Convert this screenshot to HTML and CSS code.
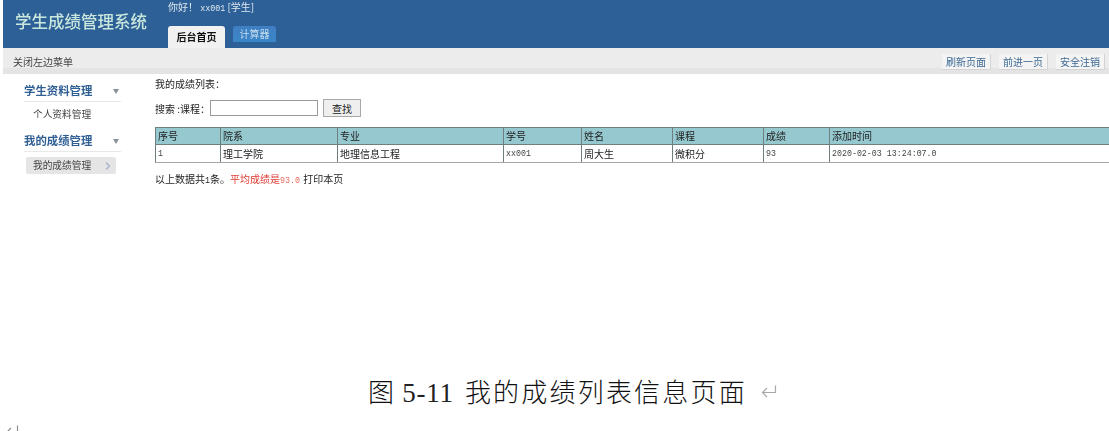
FILE: index.html
```html
<!DOCTYPE html>
<html lang="zh">
<head>
<meta charset="utf-8">
<title>学生成绩管理系统</title>
<link rel="stylesheet" href="styles.css">
</head>
<body>
<div class="shot">
  <header class="top">
    <div class="brand">学生成绩管理系统</div>
    <div class="top-main">
      <div class="hello">你好！ <span class="mono">xx001</span> [学生]</div>
      <div class="tabs">
        <span class="tab active">后台首页</span>
        <span class="tab calc">计算器</span>
      </div>
    </div>
  </header>
  <div class="bar">
    <span class="bar-left">关闭左边菜单</span>
    <div class="bar-actions">
      <span class="btn">刷新页面</span>
      <span class="btn">前进一页</span>
      <span class="btn">安全注销</span>
    </div>
  </div>
  <div class="body">
    <aside class="side">
      <div class="group"><span>学生资料管理</span><i class="tri"></i></div>
      <div class="item">个人资料管理</div>
      <div class="group"><span>我的成绩管理</span><i class="tri"></i></div>
      <div class="item current"><span>我的成绩管理</span>
        <svg class="chev" width="6" height="8" viewBox="0 0 6 8"><path d="M1 0.5 L4.5 4 L1 7.5" fill="none" stroke="#a9b4cc" stroke-width="1.4"/></svg>
      </div>
    </aside>
    <main class="main">
      <div class="title">我的成绩列表：</div>
      <div class="search">
        <span class="search-label">搜索 :课程：</span>
        <input class="field" type="text">
        <button class="find" type="button">查找</button>
      </div>
      <table class="grid">
        <colgroup>
          <col class="c1"><col class="c2"><col class="c3"><col class="c4"><col class="c5"><col class="c6"><col class="c7"><col>
        </colgroup>
        <thead>
          <tr><th>序号</th><th>院系</th><th>专业</th><th>学号</th><th>姓名</th><th>课程</th><th>成绩</th><th>添加时间</th></tr>
        </thead>
        <tbody>
          <tr><td class="mono">1</td><td>理工学院</td><td>地理信息工程</td><td class="mono">xx001</td><td>周大生</td><td>微积分</td><td class="mono">93</td><td class="mono">2020-02-03 13:24:07.0</td></tr>
        </tbody>
      </table>
      <div class="summary">以上数据共<span class="mono">1</span>条。<span class="red">平均成绩是<span class="mono">93.0</span></span> <span class="print">打印本页</span></div>
    </main>
  </div>
</div>
<div class="caption"><span class="cap-cjk">图</span> <span class="cap-num">5-11</span> <span class="cap-cjk">我的成绩列表信息页面</span>
  <svg class="ret" width="16" height="13" viewBox="0 0 16 13"><path d="M14.5 0.5 V7.5 H1.5 M6 3 L1.5 7.5 L6 12" fill="none" stroke="#a8a8a8" stroke-width="1.2"/></svg>
</div>
<svg class="foot-ret" width="16" height="13" viewBox="0 0 16 13"><path d="M12.5 0.5 V7.5 H1.5 M6 3 L1.5 7.5 L6 12" fill="none" stroke="#8f8f8f" stroke-width="1.2"/></svg>
</body>
</html>
```
FILE: styles.css
```css
* { box-sizing: border-box; }
html, body { margin: 0; padding: 0; background: #fff; }
body { width: 1109px; height: 431px; overflow: hidden; font-family: "Noto Sans CJK SC", "Liberation Sans", sans-serif; font-size: 10px; color: #333; }
.shot { padding-left: 3px; filter: blur(0.3px); }
.mono { font-family: "Liberation Mono", "DejaVu Sans Mono", monospace; font-size: 8.3px; }
.top { height: 48px; background: #2d6096; display: flex; }
.brand { width: 163px; padding: 11px 0 0 12px; font-size: 16.5px; line-height: 20px; color: #c9e6dd; font-weight: 500; white-space: nowrap; }
.top-main { display: flex; flex-direction: column; }
.hello { padding: 0 0 0 2px; color: #dfe8f0; font-size: 10px; line-height: 14px; height: 26px; }
.tabs { display: flex; gap: 8px; padding-left: 2px; }
.tab { height: 22px; line-height: 22px; text-align: center; font-size: 10px; }
.active { width: 57px; background: #f1f1f1; color: #111; font-weight: 700; border-radius: 3px 3px 0 0; }
.calc { width: 43px; height: 16px; line-height: 16px; background: linear-gradient(#3f7fc2, #3a86c9); color: #c3dcec; border-radius: 3px 3px 0 0; }
.bar { height: 26px; padding: 0 4px 0 10px; background: linear-gradient(#ececec 0, #ececec 20px, #e4e4e4 20px); display: flex; align-items: center; justify-content: space-between; }
.bar-left { color: #444; font-size: 10px; }
.bar-actions { display: flex; gap: 8px; padding-top: 2px; }
.btn { width: 49px; height: 16px; line-height: 15px; text-align: center; background: #f4f4f4; color: #3d6894; font-size: 10px; border-right: 1px solid #d4d4d4; border-bottom: 1px solid #d4d4d4; }
.body { display: flex; height: 300px; }
.side { width: 152px; padding: 5px 0 0 21px; }
.group { width: 97px; height: 23px; display: flex; align-items: center; justify-content: space-between; color: #2f5f93; font-size: 11.4px; font-weight: 700; border-bottom: 1px solid #e8e8e8; }
.tri { width: 0; height: 0; border-left: 3px solid transparent; border-right: 3px solid transparent; border-top: 5px solid #8a9199; margin: 3px 2px 0 0; }
.item { width: 90px; height: 25px; line-height: 25px; margin-left: 2px; padding-left: 7px; font-size: 9.7px; color: #444; }
.item + .group { margin-top: 2px; }
.current { height: 17px; line-height: 17px; margin-top: 5px; background: #e5e5e5; border-radius: 2px; display: flex; align-items: center; justify-content: space-between; padding-right: 5px; }
.main { flex: 1; padding-top: 3px; min-width: 0; }
.title { font-size: 10px; line-height: 14px; color: #222; }
.search { display: flex; align-items: center; height: 20px; margin-top: 7px; font-size: 10px; color: #222; }
.search-label { width: 55px; white-space: nowrap; }
.field { width: 108px; height: 16px; margin: 0 5px 0 0; border: 1px solid #9a9a9a; background: #fff; padding: 0; }
.find { width: 38px; height: 18px; border: 1px solid #a8a8a8; background: #efefef; font: 10px "Noto Sans CJK SC", sans-serif; color: #222; padding: 0; }
.grid { width: 954px; margin-top: 9px; border-collapse: collapse; table-layout: fixed; }
.grid th, .grid td { border: 1px solid #6f7f80; height: 17px; padding: 0 0 0 2px; font-size: 10px; line-height: 14px; font-weight: 400; text-align: left; color: #222; white-space: nowrap; overflow: hidden; }
.grid th { background: #95c8cf; }
.grid td { height: 18px; border-bottom-color: #a8a8a8; }
.grid tr > *:last-child { border-right: 0; }
.grid td.mono { font-size: 8.3px; color: #444; }
.c1 { width: 65px; }
.c2 { width: 117px; }
.c3 { width: 166px; }
.c4 { width: 78px; }
.c5 { width: 91px; }
.c6 { width: 91px; }
.c7 { width: 66px; }
.summary { margin-top: 9px; font-size: 10px; line-height: 14px; color: #222; }
.red { color: #e03a30; }
.red .mono { color: #e86a60; }
.print { margin-left: 1px; }
.caption { display: flex; align-items: baseline; height: 34px; margin-left: 368px; font-size: 26px; letter-spacing: 2.2px; line-height: 34px; color: #111; font-weight: 300; white-space: nowrap; }
.cap-num { font-family: "Liberation Serif", serif; font-size: 27px; font-weight: 400; color: #222; letter-spacing: 0.8px; margin: 0 11px 0 6px; }
.ret { margin-left: 14px; align-self: center; }
.foot-ret { display: block; margin: 17px 0 0 5px; }
```
